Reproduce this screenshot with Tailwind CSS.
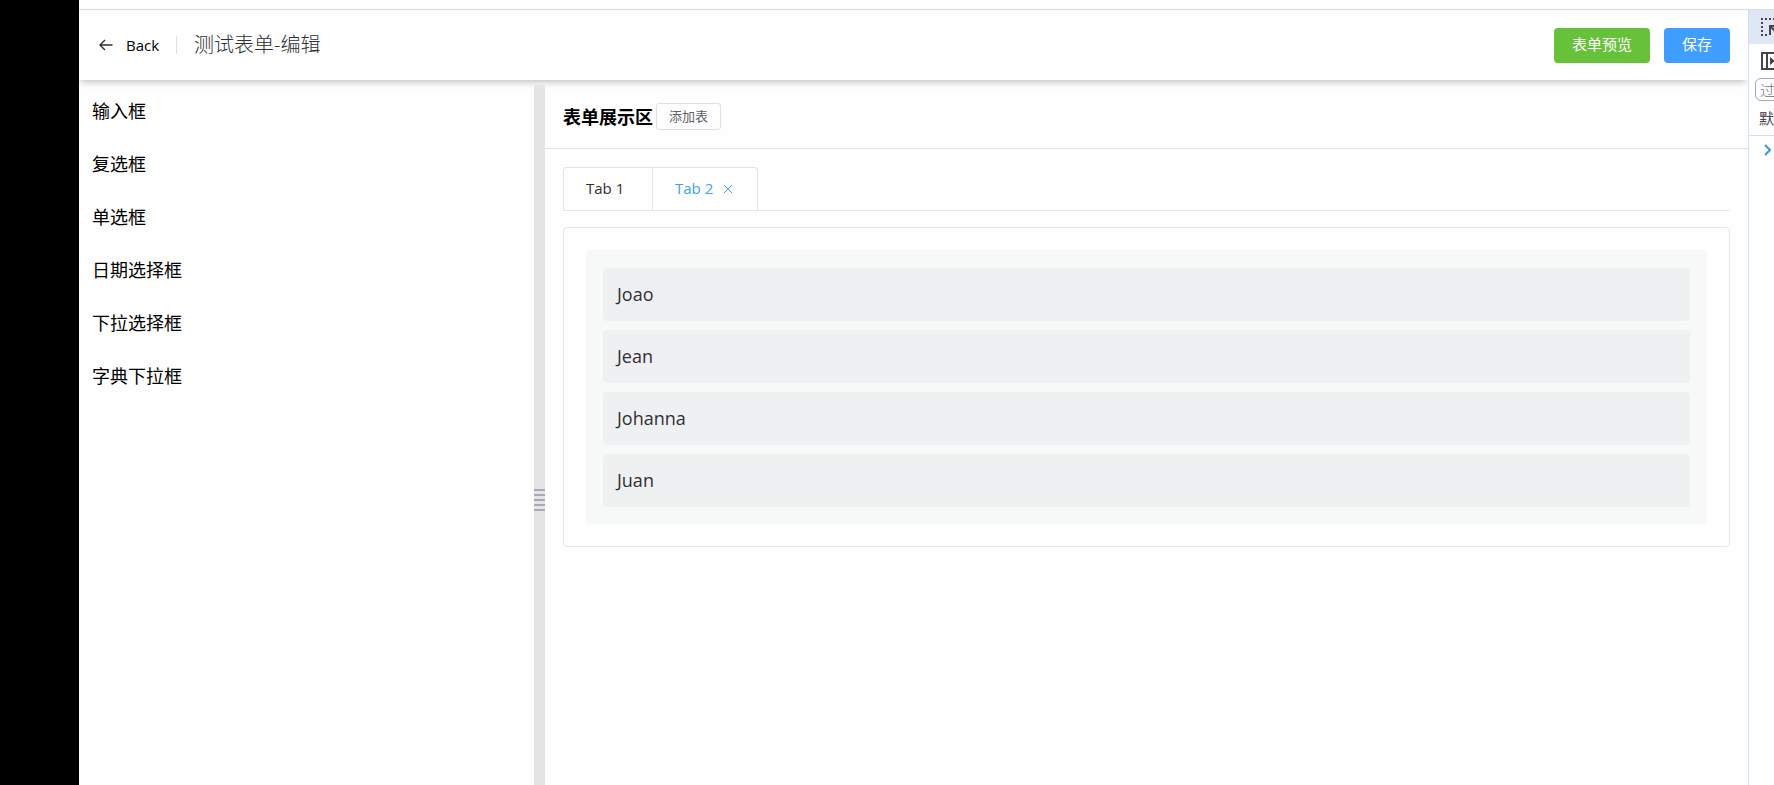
<!DOCTYPE html>
<html lang="zh-CN">
<head>
    <meta charset="UTF-8">
    <meta name="viewport" content="width=device-width, initial-scale=1.0">
    <title>测试表单-编辑</title>
    <script src="https://cdn.jsdelivr.net/npm/@tailwindcss/browser@4"></script>
</head>
<body class="bg-[#fefefe] text-black font-['Open_Sans','Noto_Sans_CJK_SC',sans-serif]">
<div class="flex h-screen overflow-hidden">
    <div class="w-[79px] shrink-0 bg-black"></div>

    <div class="flex min-w-0 flex-1 flex-col">
        <div class="h-[10px] shrink-0 border-b border-[#dcdcdf]"></div>

        <div class="flex min-h-0 flex-1">
            <!-- app -->
            <div class="flex min-w-0 flex-1 flex-col overflow-hidden">
                <header class="flex h-[70px] shrink-0 items-center justify-between px-[18px] shadow-[0_4px_7px_-2px_rgba(0,0,0,0.25)]">
                    <div class="flex items-center">
                        <button type="button" class="flex items-center gap-[11px] text-[15px]">
                            <svg class="size-[18px]" viewBox="0 0 18 18" fill="none" stroke="#303133" stroke-width="1.4">
                                <path d="M15.500 9H3M8 4L3 9l5 5"/>
                            </svg>
                            Back
                        </button>
                        <div class="mx-[17px] h-[18px] w-px bg-[#dcdfe6]"></div>
                        <h1 class="text-[20px] leading-6 font-light text-[#303133]">测试表单-编辑</h1>
                    </div>
                    <div class="flex gap-[14px]">
                        <button type="button" class="h-[35px] rounded bg-[#67c23a] px-[18px] pb-[2px] text-[15px] text-white">表单预览</button>
                        <button type="button" class="h-[35px] rounded bg-[#409eff] px-[18px] pb-[2px] text-[15px] text-white">保存</button>
                    </div>
                </header>

                <div class="flex min-h-0 flex-1 pt-[5px]">
                    <aside class="w-[455px] shrink-0">
                        <ul class="text-[18px] leading-[53px]">
                            <li class="px-[13px]">输入框</li>
                            <li class="px-[13px]">复选框</li>
                            <li class="px-[13px]">单选框</li>
                            <li class="px-[13px]">日期选择框</li>
                            <li class="px-[13px]">下拉选择框</li>
                            <li class="px-[13px]">字典下拉框</li>
                        </ul>
                    </aside>

                    <!-- splitter -->
                    <div class="flex w-[11px] shrink-0 cursor-col-resize flex-col justify-center bg-[#e4e5e7]">
                        <div class="mt-[130px] flex flex-col gap-[3px]">
                            <div class="h-[2px] bg-[#a9a7b6]"></div>
                            <div class="h-[2px] bg-[#a9a7b6]"></div>
                            <div class="h-[2px] bg-[#a9a7b6]"></div>
                            <div class="h-[2px] bg-[#a9a7b6]"></div>
                            <div class="h-[2px] bg-[#a9a7b6]"></div>
                        </div>
                    </div>

                    <main class="min-w-0 flex-1">
                        <div class="flex h-[64px] items-center gap-[3px] border-b border-[#e0e3e9] px-[18px]">
                            <h2 class="text-[18px] leading-6 font-bold">表单展示区</h2>
                            <button type="button" class="h-[27px] rounded-[3px] border border-[#dcdfe6] px-3 text-[13px] text-[#606266]">添加表</button>
                        </div>

                        <div class="p-[18px]">
                            <div role="tablist" class="flex h-[44px] border-b border-[#e4e7ed] text-[15px]">
                                <div class="-mb-px flex rounded-t border border-b-0 border-[#e0e3ea]">
                                    <button type="button" role="tab" class="w-[89px] border-r border-[#e0e3ea] pb-[2px] pl-[22px] text-left text-[#303133]">Tab 1</button>
                                    <button type="button" role="tab" aria-selected="true" class="flex w-[104px] items-center gap-[10px] pb-[2px] pl-[22px] text-[#409eff]">
                                        Tab 2
                                        <svg class="size-[10px]" viewBox="0 0 10 10" fill="none" stroke="currentColor">
                                            <path d="M1 1l8 8M9 1l-8 8"/>
                                        </svg>
                                    </button>
                                </div>
                            </div>

                            <div class="mt-4 rounded border border-[#e4e7ed] p-[22px]">
                                <div class="flex flex-col gap-[9px] rounded bg-[#f7f9f8] px-[17px] pt-[18px] pb-[17px] text-[18px] leading-[53px] text-[#303133]">
                                    <div class="rounded bg-[#eff0f2] px-[14px]">Joao</div>
                                    <div class="rounded bg-[#eff0f2] px-[14px]">Jean</div>
                                    <div class="rounded bg-[#eff0f2] px-[14px]">Johanna</div>
                                    <div class="rounded bg-[#eff0f2] px-[14px]">Juan</div>
                                </div>
                            </div>
                        </div>
                    </main>
                </div>
            </div>

            <!-- devtools edge -->
            <div class="w-[26px] shrink-0 overflow-hidden border-l border-[#cfe1f9] text-[#474350]">
                <button type="button" class="flex h-[34px] w-full items-center bg-[#dfe7f5] pl-[11px]" aria-label="Inspect">
                    <svg class="size-[22px] shrink-0" viewBox="0 0 22 22" fill="none" stroke="currentColor" stroke-width="2">
                        <path d="M1 3h18M2 2v18M1 19h7M19 2v6" stroke-dasharray="2 2"/>
                        <path d="M10 19v-9h9M10 10l9 9"/>
                    </svg>
                </button>
                <button type="button" class="flex h-[34px] w-full items-center pl-[11px]" aria-label="Sidebar">
                    <svg class="size-[20px] shrink-0" viewBox="0 0 20 20" fill="none" stroke="currentColor" stroke-width="2">
                        <path d="M2 2h18v16H2zM7 2v16"/>
                        <path d="M10 6l5 4-5 4z" fill="currentColor" stroke="none"/>
                    </svg>
                </button>
                <input type="text" aria-label="过滤" value="过" class="ml-[6px] block h-[23px] w-[80px] rounded-md border border-[#a9a7b0] pl-1 text-[15px] font-light text-[#77747e]">
                <div class="h-[35px] border-b border-[#cfe1f9] pl-[10px] text-[15px] leading-[34px]">默</div>
                <svg class="mt-2 ml-[15px] h-3 w-2" viewBox="0 0 8 12" fill="none" stroke="#3b94e6" stroke-width="2">
                    <path d="M1 1l5 5-5 5"/>
                </svg>
            </div>
        </div>
    </div>
</div>
</body>
</html>
